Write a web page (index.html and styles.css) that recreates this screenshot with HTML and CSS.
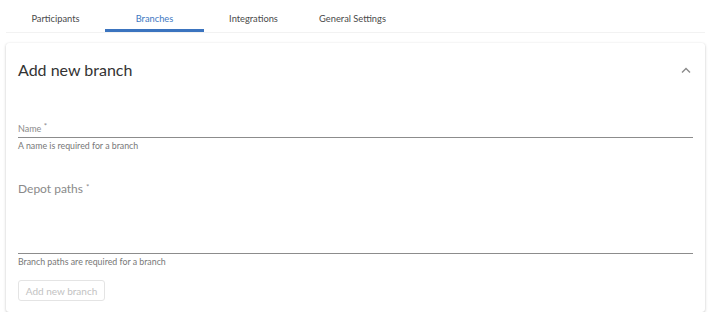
FILE: index.html
```html
<!DOCTYPE html>
<html lang="en">
<head>
    <meta charset="UTF-8">
    <meta name="viewport" content="width=device-width, initial-scale=1.0">
    <title>Branches</title>
    <link rel="stylesheet" href="styles.css">
</head>
<body>

    <div class="tabs">
        <a href="#" class="tab">Participants</a>
        <a href="#" class="tab active">Branches</a>
        <a href="#" class="tab">Integrations</a>
        <a href="#" class="tab">General Settings</a>
    </div>

    <div class="panel">
        <div class="panel-header">
            <h2>Add new branch</h2>
            <svg class="chevron" width="10" height="6" viewBox="0 0 10 6">
                <path d="M1 5.5 L5 1.5 L9 5.5" fill="none" stroke="#8a8a8a" stroke-width="1.4"/>
            </svg>
        </div>

        <div class="field">
            <label class="field-label small">Name <span class="req">*</span></label>
            <div class="field-line"></div>
            <p class="helper">A name is required for a branch</p>
        </div>

        <div class="field depot">
            <label class="field-label large">Depot paths <span class="req">*</span></label>
            <div class="field-line"></div>
            <p class="helper">Branch paths are required for a branch</p>
        </div>

        <button class="add-btn" disabled>Add new branch</button>
    </div>

</body>
</html>
```

FILE: styles.css
```css
* {
    margin: 0;
    padding: 0;
    box-sizing: border-box;
    font-family: Lato, "Open Sans", sans-serif;
}

body {
    background-color: #fff;
    color: #333;
    padding: 0 6px;
    width: 711px;
}

.tabs {
    display: flex;
    height: 33px;
    border-bottom: 1px solid #f2f2f2;
}

.tab {
    width: 99px;
    padding-top: 13px;
    text-align: center;
    font-size: 9.3px;
    color: #4a4a4a;
    text-decoration: none;
    border-bottom: 3px solid transparent;
    height: 32px;
}

.tab.active {
    color: #3d78c2;
    border-bottom-color: #3b74bf;
}

.panel {
    margin-top: 10px;
    width: 699px;
    background-color: white;
    border-radius: 3px;
    box-shadow: 0 1px 3px rgba(0, 0, 0, 0.22), 0 0 1px rgba(0, 0, 0, 0.08);
    padding: 16px 12px 11px 12px;
}

.panel-header {
    display: flex;
    justify-content: space-between;
    align-items: center;
    height: 20px;
}

.panel-header h2 {
    font-size: 16px;
    font-weight: 400;
    color: #333;
}

.chevron {
    margin-right: 2px;
    margin-top: 2px;
}

.field {
    margin-top: 42px;
}

.field-label {
    display: block;
    color: #8a8a8a;
}

.field-label.small {
    font-size: 9px;
    height: 16px;
}

.field-label.large {
    font-size: 12px;
    height: 73px;
    padding-top: 1px;
}

.req {
    font-size: 8px;
    vertical-align: 3px;
}

.field-line {
    height: 1px;
    border-top: 1px solid #8c8c8c;
}

.helper {
    font-size: 8.8px;
    color: #777;
    margin-top: 2px;
}

.depot {
    margin-top: 29px;
}

.add-btn {
    margin-top: 13px;
    height: 21px;
    width: 87px;
    background-color: white;
    border: 1px solid #e4e4e4;
    border-radius: 3px;
    color: #c2c2c2;
    font-size: 10px;
}
```
